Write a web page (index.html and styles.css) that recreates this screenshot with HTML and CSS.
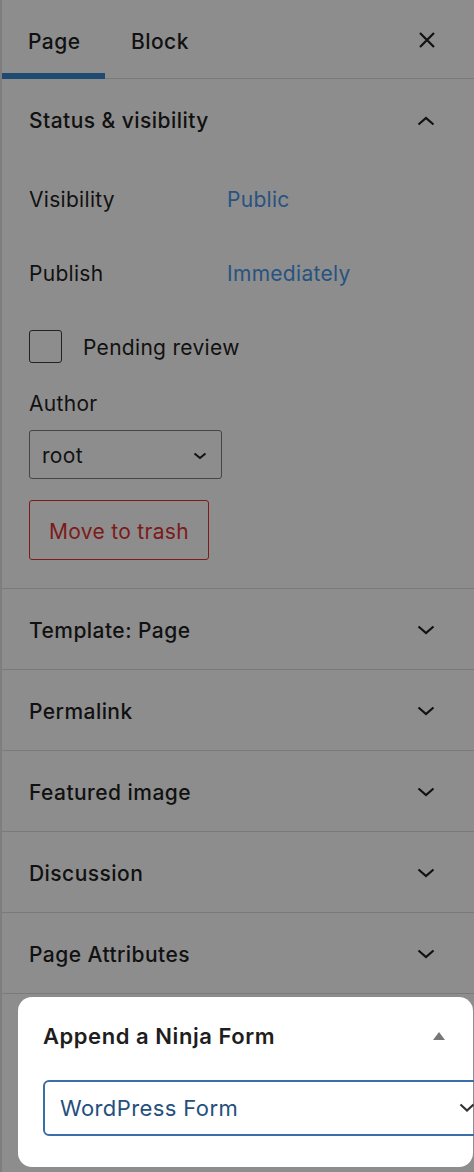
FILE: index.html
```html
<!DOCTYPE html>
<html>
<head>
<meta charset="utf-8">
<link rel="stylesheet" href="styles.css">
</head>
<body>
<div class="sidebar">
  <div class="tabs">
    <div class="tab active">Page</div>
    <div class="tab">Block</div>
    <div class="close">
      <svg width="18" height="18" viewBox="0 0 18 18"><path d="M2 2L16 16M16 2L2 16" stroke="#111" stroke-width="2.2" fill="none"/></svg>
    </div>
  </div>

  <section class="panel">
    <div class="panel-head">
      <span>Status &amp; visibility</span>
      <svg class="chev" width="18" height="11" viewBox="0 0 18 11"><path d="M1.5 9.5L9 3L16.5 9.5" stroke="#111" stroke-width="2.2" fill="none"/></svg>
    </div>
    <div class="panel-body">
      <div class="row"><span class="label">Visibility</span><span class="link">Public</span></div>
      <div class="row"><span class="label">Publish</span><span class="link">Immediately</span></div>
      <div class="row"><span class="checkbox"></span><span class="check-label">Pending review</span></div>
      <div class="author-label">Author</div>
      <div class="author-select">
        <span>root</span>
        <svg width="14" height="8" viewBox="0 0 14 8"><path d="M1.5 1.5L7 6L12.5 1.5" stroke="#111" stroke-width="2" fill="none"/></svg>
      </div>
      <div class="trash">Move to trash</div>
    </div>
  </section>

  <section class="panel closed">
    <div class="panel-head"><span>Template: Page</span><svg class="chev" width="18" height="11" viewBox="0 0 18 11"><path d="M1.5 1.5L9 8L16.5 1.5" stroke="#111" stroke-width="2.2" fill="none"/></svg></div>
  </section>
  <section class="panel closed">
    <div class="panel-head"><span>Permalink</span><svg class="chev" width="18" height="11" viewBox="0 0 18 11"><path d="M1.5 1.5L9 8L16.5 1.5" stroke="#111" stroke-width="2.2" fill="none"/></svg></div>
  </section>
  <section class="panel closed">
    <div class="panel-head"><span>Featured image</span><svg class="chev" width="18" height="11" viewBox="0 0 18 11"><path d="M1.5 1.5L9 8L16.5 1.5" stroke="#111" stroke-width="2.2" fill="none"/></svg></div>
  </section>
  <section class="panel closed">
    <div class="panel-head"><span>Discussion</span><svg class="chev" width="18" height="11" viewBox="0 0 18 11"><path d="M1.5 1.5L9 8L16.5 1.5" stroke="#111" stroke-width="2.2" fill="none"/></svg></div>
  </section>
  <section class="panel closed">
    <div class="panel-head"><span>Page Attributes</span><svg class="chev" width="18" height="11" viewBox="0 0 18 11"><path d="M1.5 1.5L9 8L16.5 1.5" stroke="#111" stroke-width="2.2" fill="none"/></svg></div>
  </section>

  <div class="ninja">
    <div class="ninja-head">
      <span>Append a Ninja Form</span>
      <svg class="tri" width="14" height="10" viewBox="0 0 14 10"><path d="M7 1L13 9H1Z" fill="#777"/></svg>
    </div>
    <div class="ninja-select">
      <span>WordPress Form</span>
      <svg width="16" height="10" viewBox="0 0 16 10"><path d="M1.5 1.5L8 7.5L14.5 1.5" stroke="#333" stroke-width="2.2" fill="none"/></svg>
    </div>
  </div>
</div>
</body>
</html>
```

FILE: styles.css
```css
* { box-sizing: border-box; }
html, body {
  margin: 0;
  padding: 0;
  background: #8d8d8d;
}
body {
  width: 474px;
  height: 1172px;
  overflow: hidden;
  font-family: Inter, "Noto Sans", sans-serif;
  color: #111;
}
.sidebar {
  border-left: 2px solid #7e7e7e;
  height: 1172px;
  overflow: hidden;
}
.tabs {
  display: flex;
  align-items: stretch;
  height: 79px;
  border-bottom: 1px solid #7a7a7a;
}
.tab {
  font-size: 21px;
  font-weight: 500;
  letter-spacing: 0.45px;
  display: flex;
  align-items: center;
  padding: 10px 26px 0 26px;
  border-bottom: 6px solid transparent;
  margin-bottom: -1px;
  height: 79px;
}
.tab.active {
  border-bottom-color: #1f4b70;
  width: 103px;
}
.tab + .tab { padding-left: 26px; }
.close {
  margin-left: auto;
  width: 72px;
  display: flex;
  align-items: center;
  justify-content: flex-start;
  padding-left: 16px;
  padding-top: 2px;
}
.panel {
  border-bottom: 1px solid #7a7a7a;
}
.panel-head {
  height: 80px;
  display: flex;
  align-items: center;
  justify-content: space-between;
  padding: 3px 39px 0 27px;
  font-size: 21px;
  font-weight: 500;
  letter-spacing: 0.45px;
}
.panel-body {
  padding: 2px 0 28px 27px;
  font-size: 21px;
  letter-spacing: 0.3px;
}
.row {
  display: flex;
  align-items: center;
  height: 74px;
  padding-top: 2px;
}
.label { width: 198px; }
.link { color: #285380; }
.checkbox {
  width: 33px;
  height: 33px;
  border: 1.5px solid #222;
  border-radius: 3px;
  margin-right: 21px;
  margin-top: -2px;
}
.author-label {
  margin-top: 5px;
  height: 30px;
  line-height: 32px;
}
.author-select {
  margin-top: 12px;
  width: 193px;
  height: 49px;
  border: 1.5px solid #454545;
  border-radius: 3px;
  display: flex;
  align-items: center;
  justify-content: space-between;
  padding: 2px 14px 0 12px;
  font-size: 21px;
}
.trash {
  margin-top: 21px;
  width: 180px;
  height: 60px;
  border: 1.5px solid #7e1a1a;
  border-radius: 3px;
  color: #7c1a1a;
  display: flex;
  align-items: center;
  justify-content: center;
  padding-top: 2px;
  font-size: 21px;
}
.ninja {
  margin: 3px 1px 0 16px;
  height: 170px;
  background: #fff;
  border-radius: 14px;
  padding: 0 0 0 25px;
}
.ninja-head {
  height: 76px;
  display: flex;
  align-items: center;
  justify-content: space-between;
  padding-right: 27px;
  padding-top: 2px;
  font-size: 22px;
  font-weight: 600;
  letter-spacing: 0.55px;
  color: #1e1e1e;
}
.ninja-select {
  margin-top: 7px;
  width: 450px;
  height: 56px;
  border: 2px solid #3a6ea6;
  border-radius: 6px;
  display: flex;
  align-items: center;
  justify-content: space-between;
  padding: 0 16px 0 15px;
  font-size: 22px;
  letter-spacing: 0.4px;
  color: #24507e;
}
```
